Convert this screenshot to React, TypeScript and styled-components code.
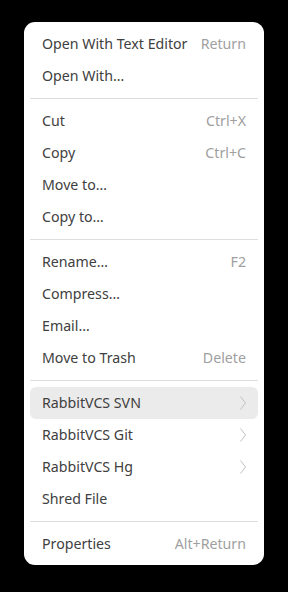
import React from "react"
import styled, { createGlobalStyle } from "styled-components"

const GlobalStyle = createGlobalStyle`
    html, body {
        margin: 0;
        padding: 0;
        background: #000;
    }
    body {
        width: 288px;
        height: 592px;
        font-family: "Noto Sans", "DejaVu Sans", sans-serif;
    }
`

const Page = styled.div`
    width: 288px;
    height: 592px;
    padding: 22px 24px 0;
    box-sizing: border-box;
`

const Menu = styled.div`
    width: 240px;
    height: 543px;
    box-sizing: border-box;
    background: #ffffff;
    border-radius: 11px;
    padding: 6px 6px 5px;
    display: flex;
    flex-direction: column;
`

const Item = styled.div<{ $hover?: boolean }>`
    height: 32px;
    display: flex;
    align-items: center;
    justify-content: space-between;
    padding: 0 12px 2px;
    box-sizing: border-box;
    border-radius: 6px;
    background: ${p => (p.$hover ? "#ebebeb" : "transparent")};
    font-size: 14.2px;
    color: #404040;
    white-space: nowrap;
`

const Shortcut = styled.span`
    color: #a0a0a0;
`

const Separator = styled.div`
    height: 13px;
    display: flex;
    align-items: center;

    &::after {
        content: "";
        flex: 1;
        height: 1px;
        background: #dedede;
    }
`

const Chevron = () => (
    <svg width="8" height="16" viewBox="0 0 8 16" style={{ marginRight: -1, marginBottom: -2 }}>
        <path d="M1.5 1.5 L6.5 8 L1.5 14.5" fill="none" stroke="#c2c2c2" strokeWidth="1" />
    </svg>
)

type Entry = { label: string; shortcut?: string; sub?: boolean; hover?: boolean }

const sections: Entry[][] = [
    [
        { label: "Open With Text Editor", shortcut: "Return" },
        { label: "Open With…" },
    ],
    [
        { label: "Cut", shortcut: "Ctrl+X" },
        { label: "Copy", shortcut: "Ctrl+C" },
        { label: "Move to…" },
        { label: "Copy to…" },
    ],
    [
        { label: "Rename…", shortcut: "F2" },
        { label: "Compress…" },
        { label: "Email…" },
        { label: "Move to Trash", shortcut: "Delete" },
    ],
    [
        { label: "RabbitVCS SVN", sub: true, hover: true },
        { label: "RabbitVCS Git", sub: true },
        { label: "RabbitVCS Hg", sub: true },
        { label: "Shred File" },
    ],
    [{ label: "Properties", shortcut: "Alt+Return" }],
]

const App = () => {
    return (
        <Page>
            <GlobalStyle />
            <Menu>
                {sections.map((section, i) => (
                    <React.Fragment key={i}>
                        {i > 0 && <Separator />}
                        {section.map(entry => (
                            <Item key={entry.label} $hover={entry.hover}>
                                <span>{entry.label}</span>
                                {entry.shortcut && <Shortcut>{entry.shortcut}</Shortcut>}
                                {entry.sub && <Chevron />}
                            </Item>
                        ))}
                    </React.Fragment>
                ))}
            </Menu>
        </Page>
    )
}

export default App
